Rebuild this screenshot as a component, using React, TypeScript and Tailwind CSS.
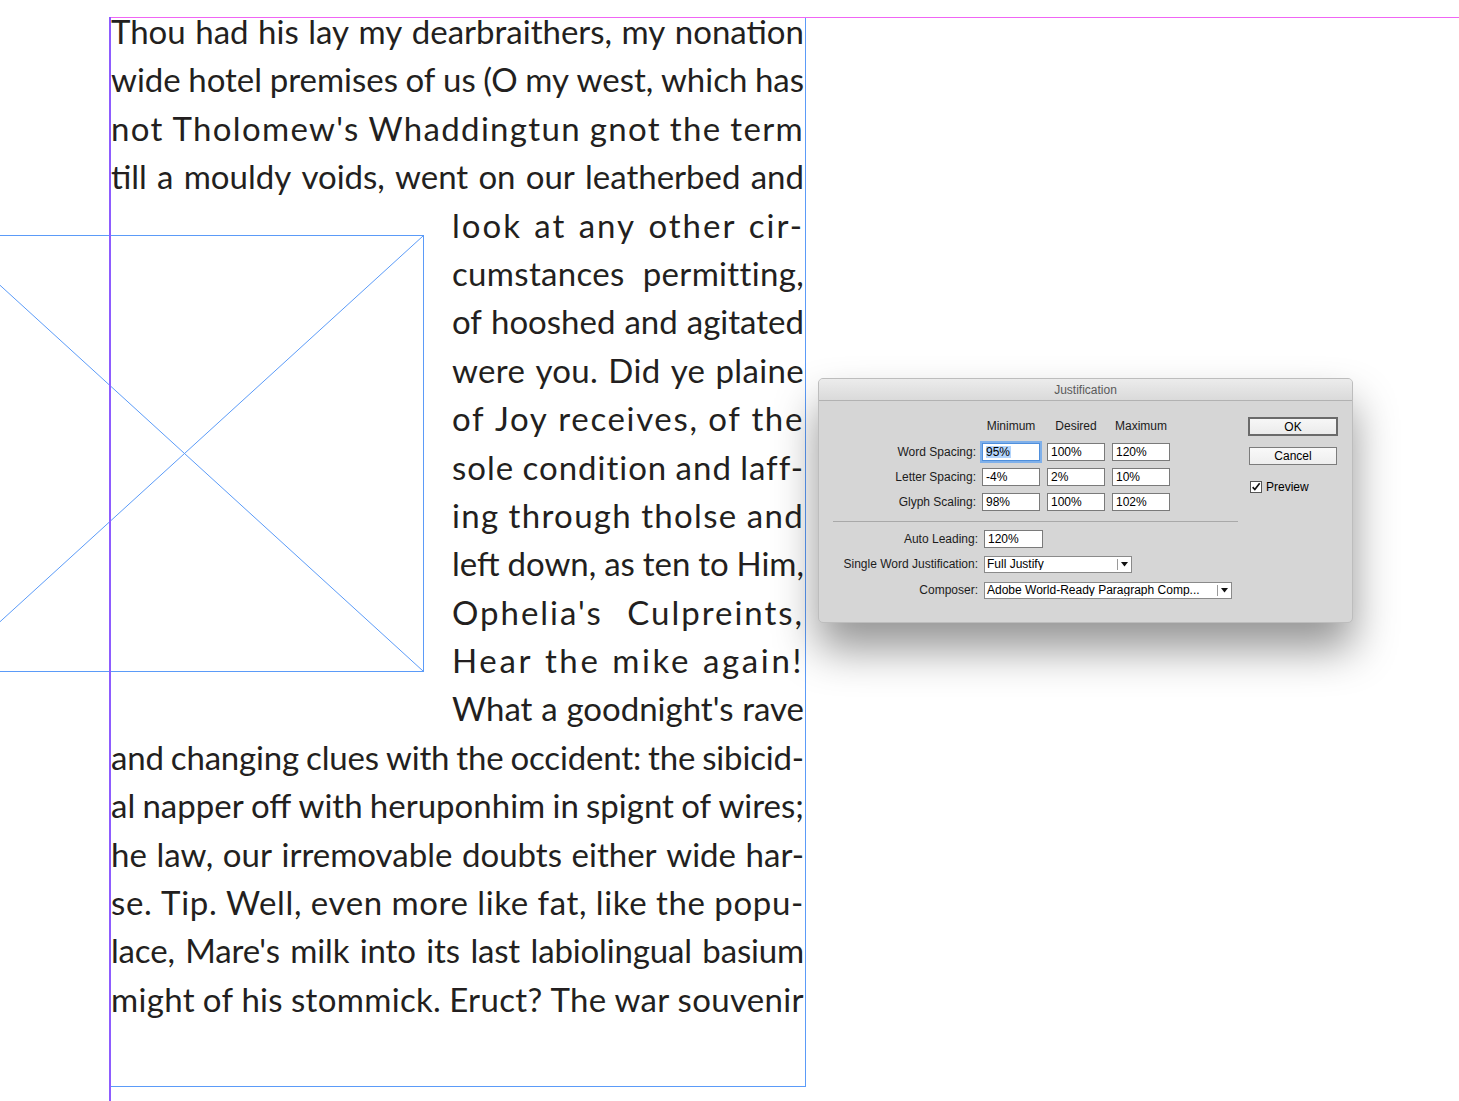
import React from 'react'

type Line = { text: string; narrow?: boolean; track?: string }

// story lines, broken the way the composer set them
const lines: Line[] = [
  { text: 'Thou had his lay my dearbraithers, my nonation' },
  { text: 'wide hotel premises of us (O my west, which has' },
  { text: "not Tholomew's Whaddingtun gnot the term", track: 'tracking-[0.04em]' },
  { text: 'till a mouldy voids, went on our leatherbed and' },
  { text: 'look at any other cir-', narrow: true, track: 'tracking-[0.06em]' },
  { text: 'cumstances permitting,', narrow: true, track: 'tracking-[0.01em]' },
  { text: 'of hooshed and agitated', narrow: true },
  { text: 'were you. Did ye plaine', narrow: true, track: 'tracking-[0.01em]' },
  { text: 'of Joy receives, of the', narrow: true, track: 'tracking-[0.05em]' },
  { text: 'sole condition and laff-', narrow: true, track: 'tracking-[0.03em]' },
  { text: 'ing through tholse and', narrow: true, track: 'tracking-[0.04em]' },
  { text: 'left down, as ten to Him,', narrow: true },
  { text: "Ophelia's Culpreints,", narrow: true, track: 'tracking-[0.06em]' },
  { text: 'Hear the mike again!', narrow: true, track: 'tracking-[0.08em]' },
  { text: "What a goodnight's rave", narrow: true },
  { text: 'and changing clues with the occident: the sibicid-', track: 'tracking-[-0.005em]' },
  { text: 'al napper off with heruponhim in spignt of wires;' },
  { text: 'he law, our irremovable doubts either wide har-' },
  { text: 'se. Tip. Well, even more like fat, like the popu-', track: 'tracking-[0.02em]' },
  { text: "lace, Mare's milk into its last labiolingual basium", track: 'tracking-[-0.005em]' },
  { text: 'might of his stommick. Eruct? The war souvenir', track: 'tracking-[0.01em]' },
]

function StoryLine({ line }: { line: Line }) {
  const words = line.text.split(' ')
  return (
    <div
      className={`flex h-[48.4px] justify-between whitespace-nowrap leading-[48.4px] ${line.narrow ? 'pl-[341px]' : ''} ${line.track ?? ''}`}
    >
      {words.map((w, i) => (
        <span key={i}>{w}</span>
      ))}
    </div>
  )
}

function Field({ value, focused, wide }: { value: string; focused?: boolean; wide?: boolean }) {
  return (
    <div
      className={`flex h-[18px] items-center bg-white pl-[3px] text-[12px] leading-none text-black ${wide ? 'w-[59px]' : 'w-[58px]'} ${
        focused ? 'border border-[#4f8fdc] ring-[2px] ring-[#7fb0ea]' : 'border border-[#7a7a7a]'
      }`}
    >
      {focused ? <span className="bg-[#b3d4fc] pr-[1px]">{value}</span> : value}
    </div>
  )
}

function Dropdown({ value, width }: { value: string; width: string }) {
  return (
    <div className={`flex h-[17px] items-center border border-[#8a8a8a] bg-white text-[12px] leading-none text-black ${width}`}>
      <span className="flex-1 truncate pl-[2px]">{value}</span>
      <span className="h-[11px] w-px bg-[#9a9a9a]" />
      <svg width="13" height="8" viewBox="0 0 13 8" className="shrink-0">
        <path d="M3 2h7l-3.5 4.5z" fill="#111" />
      </svg>
    </div>
  )
}

function JustificationDialog() {
  const rows = [
    { label: 'Word Spacing:', vals: ['95%', '100%', '120%'] },
    { label: 'Letter Spacing:', vals: ['-4%', '2%', '10%'] },
    { label: 'Glyph Scaling:', vals: ['98%', '100%', '102%'] },
  ]
  return (
    <div className="absolute left-[818px] top-[378px] flex h-[245px] w-[535px] flex-col overflow-hidden rounded-[5px] border border-[#bdbdbd] bg-[#d6d6d6] font-['Liberation_Sans',Arial,sans-serif] text-[12px] text-[#1c1c1c] shadow-[0_26px_44px_rgba(0,0,0,0.42)]">
      {/* title bar */}
      <div className="flex h-[22px] shrink-0 items-center justify-center border-b border-[#b2b2b2] bg-gradient-to-b from-[#ececec] to-[#dadada] text-[12px] text-[#5a5a5a]">
        Justification
      </div>

      <div className="flex">
        {/* form */}
        <div className="w-[420px] pl-[14px] pt-[18px]">
          <div className="flex h-[14px] items-center leading-none">
            <div className="w-[149px]" />
            <div className="flex gap-[7px]">
              <span className="w-[58px] text-center">Minimum</span>
              <span className="w-[58px] text-center">Desired</span>
              <span className="w-[58px] text-center">Maximum</span>
            </div>
          </div>

          <div className="mt-[10px] flex flex-col gap-[7px]">
            {rows.map((r, ri) => (
              <div key={r.label} className="flex items-center">
                <span className="w-[143px] text-right">{r.label}</span>
                <div className="ml-[6px] flex gap-[7px]">
                  {r.vals.map((v, vi) => (
                    <Field key={vi} value={v} focused={ri === 0 && vi === 0} />
                  ))}
                </div>
              </div>
            ))}
          </div>

          <div className="mt-[10px] h-px w-[405px] bg-[#a9a9a9]" />

          <div className="mt-[8px] flex items-center">
            <span className="w-[145px] text-right">Auto Leading:</span>
            <div className="ml-[6px]">
              <Field value="120%" wide />
            </div>
          </div>
          <div className="mt-[7px] flex items-center">
            <span className="w-[145px] text-right">Single Word Justification:</span>
            <div className="ml-[6px]">
              <Dropdown value="Full Justify" width="w-[148px]" />
            </div>
          </div>
          <div className="mt-[8px] flex items-center">
            <span className="w-[145px] text-right">Composer:</span>
            <div className="ml-[6px]">
              <Dropdown value="Adobe World-Ready Paragraph Comp..." width="w-[248px]" />
            </div>
          </div>
        </div>

        {/* buttons */}
        <div className="ml-[9px] flex flex-col pt-[16px]">
          <button className="flex h-[19px] w-[90px] items-center justify-center border-2 border-[#6a6a6a] bg-gradient-to-b from-[#f7f7f7] to-[#ebebeb] text-[12px] leading-none text-black">
            OK
          </button>
          <button className="ml-px mt-[11px] flex h-[18px] w-[88px] items-center justify-center border border-[#7c7c7c] bg-gradient-to-b from-[#f9f9f9] to-[#eeeeee] text-[12px] leading-none text-black">
            Cancel
          </button>
          <label className="ml-[2px] mt-[16px] flex items-center gap-[4px] leading-none text-black">
            <span className="flex h-[12px] w-[12px] items-center justify-center border border-[#555] bg-white">
              <svg width="12" height="12" viewBox="0 0 12 12">
                <path d="M2 6.2l2.6 2.8L10.4 1.6" fill="none" stroke="#111" strokeWidth="2" />
              </svg>
            </span>
            Preview
          </label>
        </div>
      </div>
    </div>
  )
}

export default function App() {
  return (
    <div className="relative h-[1101px] w-[1459px] overflow-hidden bg-white">
      {/* graphic frame, empty placeholder */}
      <div className="absolute left-[-55px] top-[235px] h-[437px] w-[479px] border border-[#5b9bf8]">
        <svg className="absolute inset-0 h-full w-full" viewBox="0 0 100 100" preserveAspectRatio="none">
          <line x1="0" y1="0" x2="100" y2="100" stroke="#5b9bf8" strokeWidth="1" vectorEffect="non-scaling-stroke" />
          <line x1="100" y1="0" x2="0" y2="100" stroke="#5b9bf8" strokeWidth="1" vectorEffect="non-scaling-stroke" />
        </svg>
      </div>

      {/* text frame */}
      <div className="absolute left-[110px] top-[17px] h-[1070px] w-[696px] border border-[#5b9bf8] font-['Lato',sans-serif] text-[33px] text-[#231f20]">
        <div className="-mt-[11px] pr-px">
          {lines.map((l, i) => (
            <StoryLine key={i} line={l} />
          ))}
        </div>
      </div>

      {/* guides */}
      <div className="absolute left-[110px] right-0 top-[17px] h-px bg-[#f065f5]" />
      <div className="absolute left-[109px] top-[17px] h-[1084px] w-[2px] bg-[#8e5cff]" />

      <JustificationDialog />
    </div>
  )
}
